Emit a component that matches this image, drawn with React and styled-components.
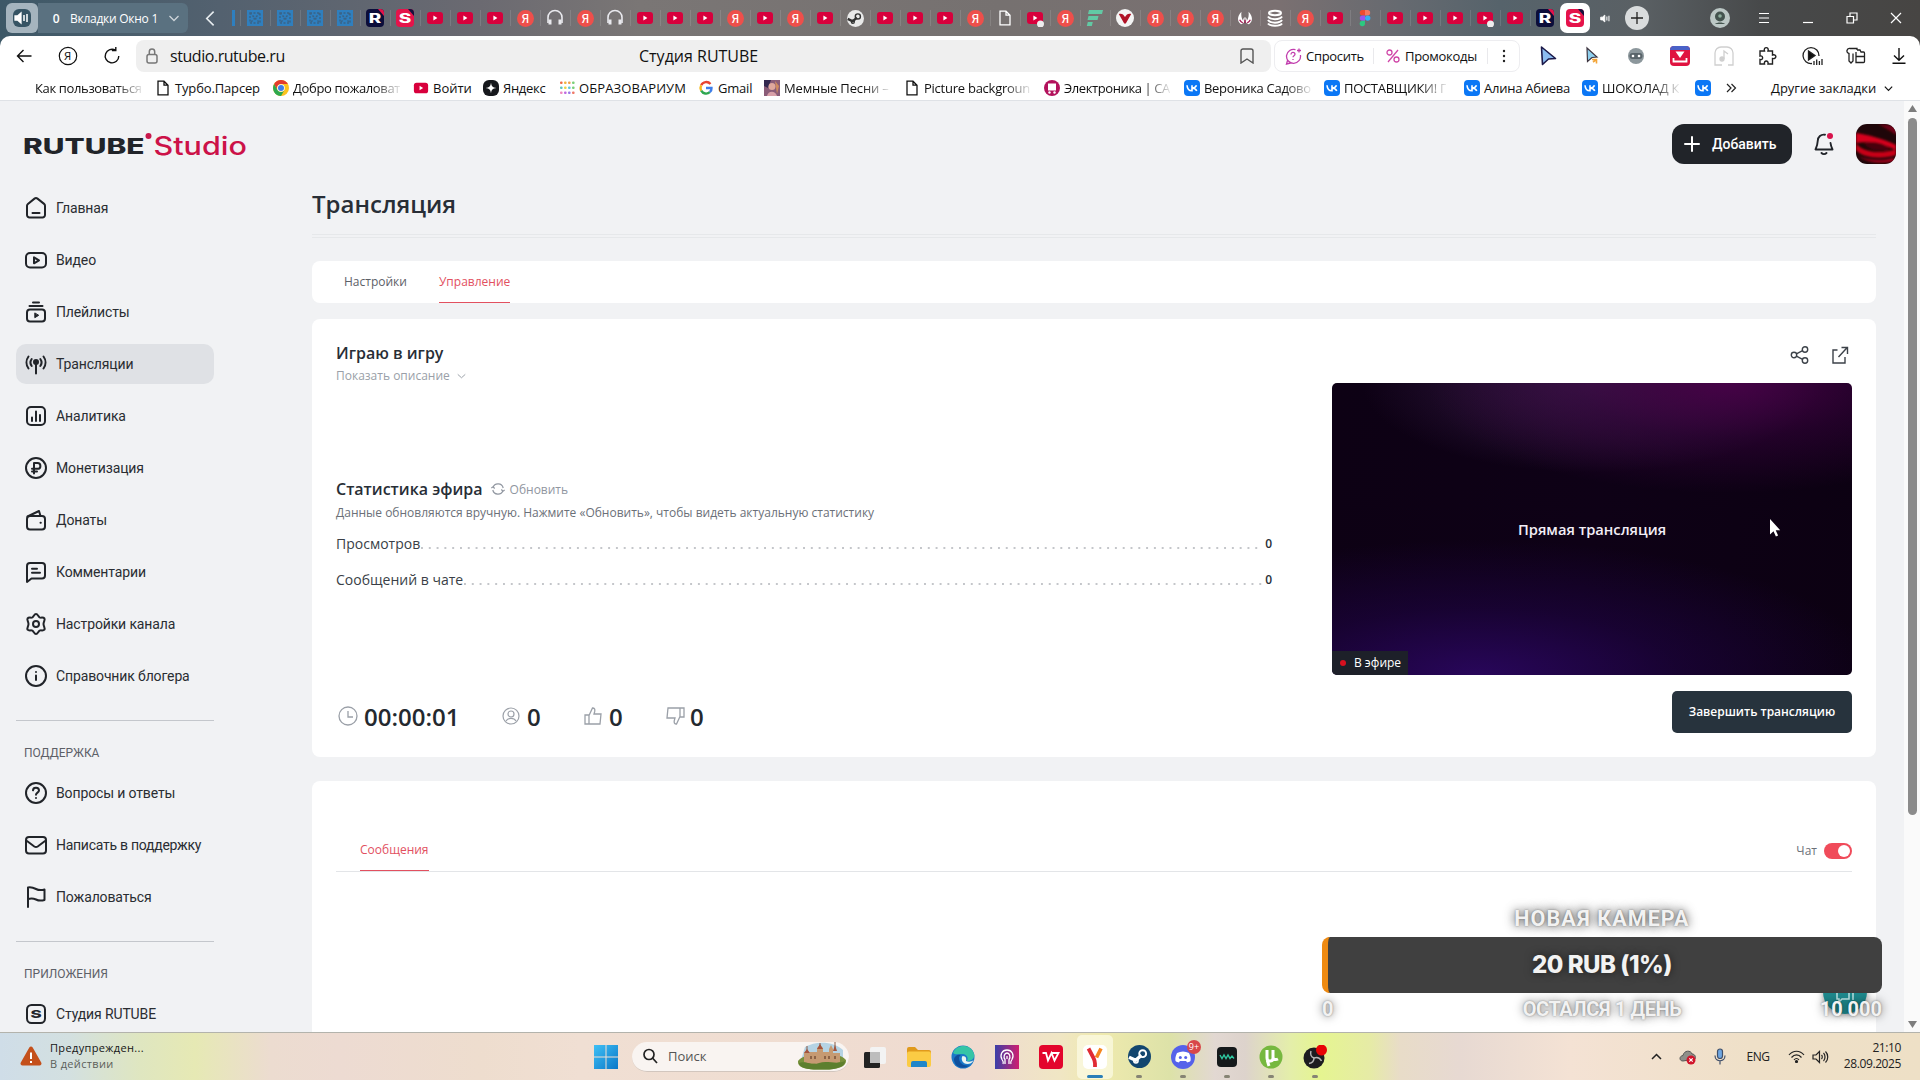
import React from "react";
import styled, { createGlobalStyle, css } from "styled-components";

const GlobalStyle = createGlobalStyle`
    * { box-sizing: border-box; }
    body {
        margin: 0;
        font-family: "Open Sans", "Noto Sans", sans-serif;
        background: #5b6266;
    }
    svg { display: block; flex: none; }
`;

const Window = styled.div`
    position: relative;
    width: 1920px;
    height: 1080px;
    overflow: hidden;
    display: flex;
    flex-direction: column;
    background: linear-gradient(90deg, #3d5867 0, #53616f 220px, #6b6a71 480px, #7a7675 640px, #767170 1000px,
        #7a7071 1280px, #666a70 1400px, #56636b 1500px, #5a6064 1640px, #47494a 1760px, #474543 1920px);
`;

/* ---------- favicons ---------- */

const YouTube = ({ dot, size = 18 }) => (
    <svg width={size} height={size} viewBox="0 0 18 18">
        <rect x="1" y="3" width="16" height="12" rx="3" fill="#d8003c" />
        <path d="M7.4 6.6v4.8L11.4 9z" fill="#fff" />
        {dot && <circle cx="14.5" cy="15" r="3.5" fill="#eee" />}
    </svg>
);

const LetterIcon = ({ bg, letter, fg = "#fff", round, size = 18, weight = 900, font = 14 }) => (
    <svg width={size} height={size} viewBox="0 0 18 18">
        <rect width="18" height="18" rx={round ? 9 : 4} fill={bg} />
        <text x="9" y={9 + font * 0.36} textAnchor="middle" fontFamily="Inter, sans-serif" fontWeight={weight} fontSize={font} fill={fg}>{letter}</text>
    </svg>
);

const YandexRed = () => <LetterIcon bg="#ee4f4b" letter="Я" round size={17} weight={500} font={12} />;
const RutubeR = () => (
    <svg width="18" height="18" viewBox="0 0 18 18">
        <rect width="18" height="18" rx="4" fill="#0b0d3a" />
        <path d="M12 0h2a4 4 0 0 1 4 4v3z" fill="#e5134a" />
        <text x="2.800" y="13.500" textLength="12.500" lengthAdjust="spacingAndGlyphs" fontFamily="Inter, sans-serif" fontWeight="800" fontSize="12.500" fill="#fff">R</text>
    </svg>
);
const RutubeS = () => (
    <svg width="18" height="18" viewBox="0 0 18 18">
        <rect width="18" height="18" rx="4" fill="#e5134a" />
        <path d="M12 0h2a4 4 0 0 1 4 4v3z" fill="#14123e" />
        <text x="2.800" y="13.500" textLength="12.500" lengthAdjust="spacingAndGlyphs" fontFamily="Inter, sans-serif" fontWeight="800" fontSize="12.500" fill="#fff">S</text>
    </svg>
);
const BlueGrid = () => (
    <svg width="18" height="18" viewBox="0 0 18 18">
        <rect x="1" y="1" width="16" height="16" fill="#2f7fbe" />
        <path d="M4 4h10v10H4zM4 4l10 10M14 4L4 14" fill="none" stroke="#3a6488" strokeWidth="1.500" strokeDasharray="2 1.5" />
    </svg>
);
const Headphones = () => (
    <svg width="18" height="18" viewBox="0 0 18 18" fill="none" stroke="#e9e9ee" strokeWidth="1.600">
        <path d="M2 14V8.500a7 7 0 0 1 14 0V14" />
        <path d="M4 10.500v5M14 10.500v5" strokeWidth="3" />
    </svg>
);
const Steam = ({ size = 17 }) => (
    <svg width={size} height={size} viewBox="0 0 18 18">
        <circle cx="9" cy="9" r="9" fill={size > 20 ? "#12466f" : "#e9e9e9"} />
        <g fill="none" stroke={size > 20 ? "#fff" : "#333"}>
            <path d="M0.800 9.500L6 12 10.500 8" strokeWidth="2.600" />
            <circle cx="11.500" cy="6.800" r="2.700" strokeWidth="1.500" />
            <circle cx="6.200" cy="12.400" r="1.700" strokeWidth="1.200" />
        </g>
    </svg>
);
const Doc = ({ color = "#fff" }) => (
    <svg width="16" height="16" viewBox="0 0 16 16" fill="none" stroke={color} strokeWidth="1.300">
        <path d="M3 1.200h6L13 5.200v9.600H3zM9 1.200v4h4" />
    </svg>
);
const GreenF = () => (
    <svg width="18" height="18" viewBox="0 0 18 18" fill="#62c9a4">
        <path d="M3 1h14l-1 4H2zM2.500 7h10l-1 4h-10zM1.800 13h5l-1 4h-5z" />
    </svg>
);
const WhiteV = () => (
    <svg width="18" height="18" viewBox="0 0 18 18">
        <circle cx="9" cy="9" r="9" fill="#f4f4f4" />
        <path d="M2.800 5c2.500-1 4.700 0 6.200 3 1.500-3 3.700-4 6.200-3L9.800 14.500H8.200z" fill="#b01226" />
    </svg>
);
const WingIcon = () => (
    <svg width="16" height="16" viewBox="0 0 18 18" fill="#fff">
        <path d="M5 2C0 7 0 13 4.500 16c3 0 4.500-3 4-8-1 1-1.500 2-1.500 4C5 10 4.500 6 5 2zM13 2c5 5 5 11 .500 14-3 0-4.500-3-4-8 1 1 1.500 2 1.500 4 2-2 2.500-6 2-10z" />
        <path d="M3 11c1 2 2 3 3.500 3.500M15 11c-1 2-2 3-3.500 3.500M9 11v4" fill="none" stroke="#a01850" strokeWidth="1.500" />
    </svg>
);
const Layers = () => (
    <svg width="18" height="18" viewBox="0 0 18 18" fill="none" stroke="#fff" strokeWidth="2">
        <ellipse cx="9" cy="4" rx="6" ry="2.200" />
        <path d="M2 7.500c2 3.500 12 3.500 14 0M2 11c2 3.500 12 3.500 14 0M2 14.500c2 3 12 3 14 0" />
    </svg>
);
const Figma = () => (
    <svg width="18" height="18" viewBox="0 0 18 18">
        <path d="M9 1H6.500a2.700 2.700 0 0 0 0 5.400H9z" fill="#ef4b30" />
        <path d="M9 1h2.500a2.700 2.700 0 0 1 0 5.400H9z" fill="#f57862" />
        <path d="M9 6.400H6.500a2.700 2.700 0 0 0 0 5.400H9z" fill="#9a55f0" />
        <circle cx="11.700" cy="9.100" r="2.700" fill="#35aef5" />
        <path d="M9 11.800H6.500A2.700 2.700 0 1 0 9 14.500z" fill="#2bc980" />
    </svg>
);
const Speaker = ({ size = 16, color = "#fff" }) => (
    <svg width={size} height={size} viewBox="0 0 16 16" fill="none" stroke={color} strokeWidth="1.300">
        <path d="M1 6h2.500L7 3v10L3.500 10H1z" fill={color} />
        <path d="M10 5v6M13 4v8" strokeWidth="1.500" />
    </svg>
);

/* ---------- tab strip ---------- */

const TabStrip = styled.div`
    height: 36px;
    display: flex;
    align-items: center;
    padding-left: 6px;
`;
const SoundChip = styled.div`
    width: 32px;
    height: 30px;
    border-radius: 6px;
    background: #a5b4be;
    display: flex;
    align-items: center;
    justify-content: center;
`;
const SoundFace = styled.div`
    padding: 1px;
    border-radius: 6px;
    background: #365464;
`;
const TabGroup = styled.div`
    width: 150px;
    height: 30px;
    display: flex;
    align-items: center;
    padding-left: 9px;
    border-radius: 0 6px 6px 0;
    background: #5a7180;
    color: #fff;
    font-size: 12px;
    letter-spacing: -0.26px;
`;
const GroupCount = styled.span`
    width: 18px;
    margin-right: 5px;
    text-align: center;
    font-weight: 600;
`;
const Chevron = styled.svg.attrs({ viewBox: "0 0 12 12", fill: "none", stroke: "currentColor" })`
    width: ${(p) => p.$size || 12}px;
    height: ${(p) => p.$size || 12}px;
    stroke-width: 1.3;
    margin-left: ${(p) => p.$left || 0}px;
`;
const TabCell = styled.div`
    width: 30px;
    height: 30px;
    display: flex;
    align-items: center;
    justify-content: center;
    border-radius: 7px;
    flex: none;
    position: relative;
    ${(p) => p.$active && css`background: #fff;`}
    ${(p) => p.$divided && css`
        &::before {
            content: "";
            position: absolute;
            left: 0;
            top: 7px;
            height: 16px;
            width: 1px;
            background: rgba(255, 255, 255, 0.12);
        }
    `}
`;
const ScrollLeft = styled.div`
    width: 52px;
    padding-left: 15px;
    display: flex;
    align-items: center;
    gap: 14px;
    color: #e6ebee;
`;
const BlueEdge = styled.div`
    width: 3px;
    height: 16px;
    background: #2f7fbe;
`;
const AddTab = styled.div`
    width: 24px;
    height: 24px;
    margin-left: 5px;
    border-radius: 50%;
    background: #d9dcdd;
    display: flex;
    align-items: center;
    justify-content: center;
`;
const WindowButtons = styled.div`
    display: flex;
    margin-left: 49px;
`;
const WinButton = styled.div`
    width: 44px;
    display: flex;
    align-items: center;
    justify-content: center;
`;

const TABS = {
    b: <BlueGrid />, R: <RutubeR />, S: <RutubeS />, y: <YouTube />, Y: <YouTube dot />, a: <YandexRed />,
    h: <Headphones />, s: <Steam />, d: <Doc />, g: <GreenF />, v: <WhiteV />, w: <WingIcon />, l: <Layers />, f: <Figma />,
};
const TAB_ORDER = "bbbbRSyyyahahyyyayaysyyyadYagvaaawlayfyyyYyR";

const Tabs = () => (
    <TabStrip>
        <SoundChip><SoundFace><Speaker /></SoundFace></SoundChip>
        <TabGroup>
            <GroupCount>0</GroupCount>Вкладки Окно 1
            <Chevron $left={10}><path d="M1.500 4l4.500 4.500L10.500 4" opacity="0.700" /></Chevron>
        </TabGroup>
        <ScrollLeft>
            <Chevron $size={15}><path d="M8.500 0.500L3 6 8.500 11.500" /></Chevron>
            <BlueEdge />
        </ScrollLeft>
        {TAB_ORDER.split("").map((key, i) => <TabCell key={i} $divided>{TABS[key]}</TabCell>)}
        <TabCell $active><RutubeS /></TabCell>
        <TabCell><Speaker size={11} /></TabCell>
        <AddTab>
            <svg width="14" height="14" viewBox="0 0 14 14" stroke="#222" strokeWidth="1.300"><path d="M7 1v12M1 7h12" /></svg>
        </AddTab>
        <WindowButtons>
            <WinButton>
                <svg width="20" height="20" viewBox="0 0 20 20">
                    <circle cx="10" cy="10" r="10" fill="#bcc8c6" />
                    <circle cx="10" cy="8.500" r="5" fill="#44544f" />
                    <circle cx="10" cy="8" r="1.800" fill="#8fb09f" />
                    <path d="M5 16c2-2 8-2 10 0z" fill="#44544f" />
                </svg>
            </WinButton>
            <WinButton><svg width="12" height="12" stroke="#fff" strokeWidth="1.200"><path d="M1 1.500h10M1 6h10M1 10.500h10" /></svg></WinButton>
            <WinButton><svg width="12" height="12" stroke="#fff" strokeWidth="1.200"><path d="M1 10.500h10" /></svg></WinButton>
            <WinButton><svg width="12" height="12" fill="none" stroke="#fff" strokeWidth="1.200"><path d="M1 4.500h6.500V11H1zM4 4.500V1h7v7H7.500" /></svg></WinButton>
            <WinButton><svg width="12" height="12" stroke="#fff" strokeWidth="1.200"><path d="M1 1l10 10M11 1L1 11" /></svg></WinButton>
        </WindowButtons>
    </TabStrip>
);

/* ---------- toolbar ---------- */

const BrowserPanel = styled.div`
    flex: 1;
    min-height: 0;
    display: flex;
    flex-direction: column;
    border-radius: 10px 10px 0 0;
    background: #fff;
    overflow: hidden;
`;
const Toolbar = styled.div`
    height: 40px;
    display: flex;
    align-items: center;
    padding-left: 2px;
`;
const ToolButton = styled.div`
    width: ${(p) => p.$w || 44}px;
    flex: none;
    display: flex;
    align-items: center;
    justify-content: center;
`;
const AddressBar = styled.div`
    width: 1135px;
    height: 32px;
    border-radius: 8px;
    background: #efefef;
    display: flex;
    align-items: center;
    padding-left: 10px;
    margin-left: 2px;
    color: #111;
`;
const Url = styled.span`
    width: 481px;
    padding-left: 12px;
    font-size: 16px;
    letter-spacing: -0.45px;
`;
const PageName = styled.span`
    flex: 1;
    font-size: 16px;
`;
const QuickBox = styled.div`
    width: 246px;
    height: 32px;
    margin: 0 6px 0 3px;
    border: 1px solid #ededf0;
    border-radius: 8px;
    display: flex;
    align-items: center;
    font-size: 13px;
    letter-spacing: -0.3px;
    color: #111;
`;
const QuickItem = styled.div`
    width: ${(p) => p.$w}px;
    height: 16px;
    display: flex;
    align-items: center;
    gap: ${(p) => p.$gap}px;
    padding-left: ${(p) => p.$pad}px;
    border-right: 1px solid #e9e9ec;
`;

const TopToolbar = () => (
    <Toolbar>
        <ToolButton>
            <svg width="16" height="16" fill="none" stroke="#111" strokeWidth="1.400"><path d="M15.500 8H1.500M7.500 2L1.500 8l6 6" /></svg>
        </ToolButton>
        <ToolButton>
            <svg width="20" height="20" viewBox="0 0 20 20">
                <circle cx="10" cy="10" r="8.700" fill="none" stroke="#111" strokeWidth="1.200" />
                <text x="9.600" y="14" textAnchor="middle" fontFamily="Open Sans" fontSize="11.500" fill="#111">Я</text>
            </svg>
        </ToolButton>
        <ToolButton>
            <svg width="18" height="18" fill="none" stroke="#111" strokeWidth="1.400"><path d="M12.500 3.200A6.800 6.800 0 1 0 15.800 9M12.800 0v3.600H9" /></svg>
        </ToolButton>
        <AddressBar>
            <svg width="12" height="16" fill="none" stroke="#777" strokeWidth="1.500"><rect x="1" y="6.500" width="10" height="8.500" rx="2" /><path d="M3.300 6.500V3.800a2.700 2.700 0 0 1 5.400 0v2.700" /></svg>
            <Url>studio.rutube.ru</Url>
            <PageName>Студия RUTUBE</PageName>
            <ToolButton $w={48}>
                <svg width="14" height="16" fill="none" stroke="#555" strokeWidth="1.400"><path d="M1 3a2 2 0 0 1 2-2h8a2 2 0 0 1 2 2v12l-6-4-6 4z" /></svg>
            </ToolButton>
        </AddressBar>
        <QuickBox>
            <QuickItem $w={99} $pad={10} $gap={4}>
                <svg width="17" height="17" fill="none" stroke="#c23fae" strokeWidth="1.300">
                    <path d="M10.500 1.600A7 7 0 1 0 15.400 7M2.500 12.500L1.500 16l4-1" />
                    <path d="M6 6.500c0-3 4-2.500 4-.300 0 1.500-2 1.500-2 3M8 11v1M14 .500v4M12 2.500h4" />
                </svg>
                Спросить
            </QuickItem>
            <QuickItem $w={114} $pad={12} $gap={5}>
                <svg width="14" height="14" fill="none" stroke="#d047a8" strokeWidth="1.300"><circle cx="3.500" cy="3.500" r="2.500" /><circle cx="10.500" cy="10.500" r="2.500" /><path d="M12 1L2 13" /></svg>
                Промокоды
            </QuickItem>
            <ToolButton $w={31}>
                <svg width="4" height="14" fill="#222"><circle cx="2" cy="2" r="1.200" /><circle cx="2" cy="7" r="1.200" /><circle cx="2" cy="12" r="1.200" /></svg>
            </ToolButton>
        </QuickBox>
        <ToolButton>
            <svg width="18" height="20"><path d="M2.500 1l14 11.500-7 .500-6 5.500z" fill="#8cbcf0" stroke="#1c1a4a" strokeWidth="1.600" strokeLinejoin="round" /></svg>
        </ToolButton>
        <ToolButton>
            <svg width="16" height="20"><path d="M3 2l10 9-5 .500-4.500 4z" fill="#8fd0ee" stroke="#3d3540" strokeWidth="1.200" /><path d="M8 13.500h4.500v4M9 16l3.500-2.500" fill="none" stroke="#f3a63a" strokeWidth="1.600" /></svg>
        </ToolButton>
        <ToolButton>
            <svg width="18" height="18"><circle cx="9" cy="9" r="8" fill="#8c979c" /><rect x="2.500" y="6" width="13" height="6" rx="3" fill="#59646a" /><circle cx="6" cy="9" r="1.300" fill="#fff" /><circle cx="12" cy="9" r="1.300" fill="#fff" /></svg>
        </ToolButton>
        <ToolButton>
            <svg width="20" height="20"><rect width="20" height="20" rx="4" fill="#e0123f" /><path d="M0 4a4 4 0 0 1 4-4h12a4 4 0 0 1 4 4z" fill="#4a62c8" /><path d="M5.500 5.500h9L10 12z" fill="#fff" /><path d="M3.500 12v3.500h13V12" fill="none" stroke="#fff" strokeWidth="1.800" /></svg>
        </ToolButton>
        <ToolButton>
            <svg width="20" height="20" fill="none" stroke="#cfcfcf" strokeWidth="1.300"><path d="M8 19H1V7a6 6 0 0 1 6-6h6a6 6 0 0 1 6 6v12h-5" /><circle cx="8" cy="13" r="2" fill="#cfcfcf" /><path d="M10 13V5l4 3" /></svg>
        </ToolButton>
        <ToolButton>
            <svg width="20" height="20" fill="none" stroke="#222" strokeWidth="1.400"><path d="M2 5h4.500c-1.500-4.500 5-4.500 3.500 0h4.500v4c4.500-1.500 4.500 4.500 0 3.500V18H10c1-4-4.500-4-3.500 0H2v-4.500c3.500 1 3.500-4.500 0-3.500z" /></svg>
        </ToolButton>
        <ToolButton>
            <svg width="22" height="20" fill="none" stroke="#222" strokeWidth="1.300"><path d="M11 17.500A8 8 0 1 1 18 10" /><path d="M7.500 5v9L14 9.500z" fill="#111" /><path d="M13 19v-4M15.700 19v-5.500M18.400 19v-4M21 19v-6" /></svg>
        </ToolButton>
        <ToolButton>
            <svg width="20" height="20" fill="none" stroke="#222" strokeWidth="1.300"><path d="M11 4V2.500H4a2.500 2.500 0 0 0-1 5V15l2 2 2-2V7.500M11 4h3l1 2h2.500a1 1 0 0 1 1 1v8.500a1 1 0 0 1-1 1h-7.500V6M10 10.500h8.500" /></svg>
        </ToolButton>
        <ToolButton $w={42}>
            <svg width="14" height="16" fill="none" stroke="#111" strokeWidth="1.400"><path d="M7 0v12M2 7.500L7 12.300l5-4.800M0.500 15.300h13" /></svg>
        </ToolButton>
    </Toolbar>
);

/* ---------- bookmarks ---------- */

const BookmarkBar = styled.div`
    height: 25px;
    display: flex;
    align-items: center;
    padding-left: 15px;
    border-bottom: 1px solid #dfe2e6;
    font-size: 13px;
    color: #111;
`;
const Bookmark = styled.div`
    width: ${(p) => p.$w}px;
    flex: none;
    display: flex;
    align-items: center;
    gap: 4px;
`;
const BookmarkIcon = styled.div`
    width: 16px;
    height: 16px;
    flex: none;
`;
const BookmarkText = styled.span`
    white-space: nowrap;
    letter-spacing: ${(p) => p.$ls || 0}px;
    ${(p) => p.$fade && css`mask-image: linear-gradient(90deg, #000 calc(100% - 26px), rgba(0, 0, 0, 0.1));`}
`;

const Vk = () => (
    <svg width="16" height="16" viewBox="0 0 16 16">
        <rect width="16" height="16" rx="4" fill="#0b77f5" />
        <path d="M3 5.200c.300 3.600 2 5.600 5 5.600V5.200M8 8c2 0 3.800-1 4.500-2.800M8 8c2.300.200 4 1.200 4.800 2.800" fill="none" stroke="#fff" strokeWidth="1.600" />
    </svg>
);
const Chrome = () => (
    <svg width="16" height="16" viewBox="0 0 16 16">
        <circle cx="8" cy="8" r="8" fill="#fcc31e" />
        <path d="M1.100 4A8 8 0 0 1 14.900 4H8a4 4 0 0 0-3.500 6z" fill="#e33b2e" />
        <path d="M1.100 4A8 8 0 0 0 8 16l3.500-6a4 4 0 0 1-7 0z" fill="#2da94f" />
        <circle cx="8" cy="8" r="3.800" fill="#fff" />
        <circle cx="8" cy="8" r="3" fill="#3f7ee8" />
    </svg>
);
const Sparkle = () => (
    <svg width="16" height="16" viewBox="0 0 16 16">
        <rect width="16" height="16" rx="6" fill="#16181c" />
        <path d="M8 2.500c.500 4 1.500 5 5.500 5.500-4 .500-5 1.500-5.500 5.500C7.500 9.500 6.500 8.500 2.500 8 6.500 7.500 7.500 6.500 8 2.500z" fill="#fff" />
    </svg>
);
const DOT_COLORS = ["#ef6b4a", "#f3b340", "#f0a050", "#7bd07a", "#5fc5c0", "#e8d44a", "#60c5e0", "#7bd07a", "#f08ac0", "#c06be0", "#9a7be8", "#ef7b6a"];
const DotGrid = () => (
    <svg width="16" height="16" viewBox="0 0 16 16">
        {DOT_COLORS.map((c, i) => (
            <rect key={i} x={1 + (i % 4) * 4} y={1.5 + Math.floor(i / 4) * 5} width="2.600" height="2.600" rx="1" fill={c} />
        ))}
    </svg>
);
const Google = () => (
    <svg width="16" height="16" viewBox="0 0 16 16" fill="none" strokeWidth="2.400">
        <path d="M12.500 4A5.600 5.600 0 0 0 3.200 5.300" stroke="#e8442f" />
        <path d="M3.200 5.300a5.600 5.600 0 0 0 0 5.400" stroke="#f6b91c" />
        <path d="M3.200 10.700a5.600 5.600 0 0 0 8.600 1.500" stroke="#2fa750" />
        <path d="M11.800 12.200c1.300-1.100 1.800-2.700 1.700-4.200H8" stroke="#3f7ee8" />
    </svg>
);
const MemePic = () => (
    <svg width="16" height="16" viewBox="0 0 16 16">
        <rect width="16" height="16" fill="#8a5c78" />
        <path d="M0 0h7L4 8 0 6z" fill="#33284f" />
        <circle cx="8" cy="6.500" r="3.500" fill="#dfa79d" />
        <path d="M3 16c1-5 8-6 10 0z" fill="#d9a0a8" />
        <path d="M11 1l4 5-2 8z" fill="#cf8a5e" />
    </svg>
);
const ShopCart = () => (
    <svg width="16" height="16" viewBox="0 0 16 16">
        <circle cx="8" cy="8" r="8" fill="#b3125c" />
        <path d="M4 3.500h8v7H4z" fill="#fff" />
        <circle cx="5.500" cy="12.500" r="1.200" fill="#fff" /><circle cx="10.500" cy="12.500" r="1.200" fill="#fff" />
    </svg>
);

const BOOKMARKS = [
    { w: 140, icon: null, text: "Как пользоваться", fade: true, ls: -0.35 },
    { w: 118, icon: <Doc color="#111" />, text: "Турбо.Парсер", ls: -0.15 },
    { w: 140, icon: <Chrome />, text: "Добро пожаловат", fade: true, ls: -0.35 },
    { w: 70, icon: <YouTube size={16} />, text: "Войти" },
    { w: 76, icon: <Sparkle />, text: "Яндекс", ls: -0.3 },
    { w: 139, icon: <DotGrid />, text: "ОБРАЗОВАРИУМ", ls: 0.1 },
    { w: 66, icon: <Google />, text: "Gmail", ls: -0.2 },
    { w: 140, icon: <MemePic />, text: "Мемные Песни –", fade: true, ls: -0.15 },
    { w: 140, icon: <Doc color="#111" />, text: "Picture backgroun", fade: true, ls: -0.25 },
    { w: 140, icon: <ShopCart />, text: "Электроника | СА", fade: true, ls: -0.4 },
    { w: 140, icon: <Vk />, text: "Вероника Садово", fade: true, ls: -0.3 },
    { w: 140, icon: <Vk />, text: "ПОСТАВЩИКИ! Г", fade: true, ls: -0.3 },
    { w: 118, icon: <Vk />, text: "Алина Абиева", ls: -0.25 },
    { w: 113, icon: <Vk />, text: "ШОКОЛАД К", fade: true, ls: -0.2 },
    { w: 30, icon: <Vk />, text: "" },
];

const Bookmarks = () => (
    <BookmarkBar>
        {BOOKMARKS.map((b, i) => (
            <Bookmark key={i} $w={b.w}>
                <BookmarkIcon>{b.icon}</BookmarkIcon>
                <BookmarkText $fade={b.fade} $ls={b.ls}>{b.text}</BookmarkText>
            </Bookmark>
        ))}
        <Bookmark $w={46}>
            <svg width="12" height="10" fill="none" stroke="#222" strokeWidth="1.200"><path d="M2 1l4 4-4 4M6.500 1l4 4-4 4" /></svg>
        </Bookmark>
        Другие закладки
        <Chevron $left={7} $size={11}><path d="M2 4l4 4 4-4" /></Chevron>
    </BookmarkBar>
);

/* ---------- site ---------- */

const Site = styled.div`
    flex: 1;
    min-height: 0;
    display: flex;
    background: #f1f2f4;
`;
const SiteContent = styled.div`
    width: 1904px;
    overflow: hidden;
`;
const Scrollbar = styled.div`
    width: 16px;
    background: #fafafa;
    display: flex;
    flex-direction: column;
    align-items: center;
    padding: 4px 0 4px 1px;
`;
const ScrollThumb = styled.div`
    width: 9px;
    height: 697px;
    margin: 6px 0 auto;
    border-radius: 5px;
    background: #8b8b8b;
`;
const SiteHeader = styled.div`
    height: 86px;
    display: flex;
    align-items: center;
    padding: 0 8px 0 24px;
`;
const AddButton = styled.div`
    width: 120px;
    height: 40px;
    margin-left: auto;
    border-radius: 12px;
    background: #212429;
    color: #fff;
    display: flex;
    align-items: center;
    gap: 12px;
    padding-left: 12px;
    font: 500 14px Roboto, sans-serif;
`;
const BellBox = styled.div`
    width: 64px;
    display: flex;
    justify-content: center;
`;
const SiteBody = styled.div`
    display: flex;
`;

const Logo = () => (
    <svg width="224" height="30" viewBox="0 0 224 30">
        <text x="-1" y="25" textLength="121.500" lengthAdjust="spacingAndGlyphs" fontFamily="Inter, sans-serif" fontWeight="800" fontSize="21" fill="#212429">RUTUBE</text>
        <circle cx="124.500" cy="7" r="3" fill="#c8184c" />
        <text x="129.500" y="25.500" textLength="93.500" lengthAdjust="spacingAndGlyphs" fontFamily="Inter, sans-serif" fontWeight="500" fontSize="25.500" fill="#cc1248">Studio</text>
    </svg>
);

const Sidebar = styled.div`
    width: 312px;
    padding: 1px 0 0 16px;
    font-family: Roboto, sans-serif;
`;
const NavItem = styled.div`
    width: 198px;
    height: 40px;
    margin-bottom: 12px;
    padding-left: 8px;
    display: flex;
    align-items: center;
    gap: 8px;
    border-radius: 10px;
    font-size: 14px;
    letter-spacing: ${(p) => (p.$long ? -0.27 : -0.13)}px;
    white-space: nowrap;
    color: #2a2d32;
    background: ${(p) => (p.$active ? "#dfe1e5" : "transparent")};
`;
const NavDivider = styled.div`
    width: 198px;
    height: 1px;
    margin: 24px 0;
    background: #c4c7cc;
`;
const NavCaption = styled.div`
    height: 16px;
    margin-bottom: 12px;
    padding-left: 8px;
    font-size: 12px;
    line-height: 16px;
    color: #5d6067;
`;
const NavSvg = styled.svg.attrs({ width: 24, height: 24, viewBox: "0 0 24 24", fill: "none", stroke: "#212429", strokeLinecap: "round", strokeLinejoin: "round" })`
    stroke-width: 2;
`;

const NAV_ICONS = {
    home: <path d="M3 9.800c0-.800.300-1.400.900-1.900l6.600-5.300c.900-.700 2.100-.700 3 0l6.600 5.300c.600.500.900 1.100.900 1.900V19a2.500 2.500 0 0 1-2.500 2.500h-13A2.500 2.500 0 0 1 3 19zM8.500 17h7" />,
    video: <><rect x="2" y="5" width="20" height="14.500" rx="4" /><path d="M10 9.300v6l5-3z" /></>,
    lists: <><rect x="3" y="9.500" width="18" height="12" rx="3" /><path d="M5.500 6h13M9 2.500h6" /><path d="M10.800 13.300v4.400l3.600-2.200z" fill="#212429" strokeWidth="1" /></>,
    live: <><path d="M12 11v10.500M4.500 4.500a10 10 0 0 0 0 12M19.500 4.500a10 10 0 0 1 0 12M7.700 7a6 6 0 0 0 0 7M16.300 7a6 6 0 0 1 0 7" /><circle cx="12" cy="10" r="2" fill="#212429" /></>,
    chart: <><rect x="3" y="3" width="18" height="18" rx="4" /><path d="M8 13.500V17M12 7.500V17M16 11v6" /></>,
    ruble: <><circle cx="12" cy="12" r="10" /><path d="M10 17.500V7h3.500a2.900 2.900 0 0 1 0 5.800H8M8 15.500h5" /></>,
    wallet: <><rect x="3" y="8" width="18" height="13.500" rx="3" /><path d="M3.500 8.500L15 3l1.500 5M16.500 14.700h.300" /></>,
    chat: <path d="M3 22V6a3 3 0 0 1 3-3h12a3 3 0 0 1 3 3v9.500a3 3 0 0 1-3 3H7.500zM8 8.700h5M8 12.700h8" />,
    gear: <><path d="M12 2c1.800 0 2.200 2.600 3.600 3.400 1.400.700 3.700-.500 4.800.900 1 1.700-.900 3.500-.900 5.700s1.900 4 .900 5.700c-1.100 1.400-3.400.200-4.800.900C14.200 19.400 13.800 22 12 22s-2.200-2.600-3.600-3.400c-1.400-.700-3.700.500-4.800-.900-1-1.700.900-3.500.900-5.700s-1.900-4-.900-5.700c1.100-1.400 3.400-.200 4.800-.900C9.800 4.600 10.200 2 12 2z" /><circle cx="12" cy="12" r="3" /></>,
    info: <><circle cx="12" cy="12" r="10" /><path d="M12 11.500V16M12 8v.100" /></>,
    help: <><circle cx="12" cy="12" r="10" /><path d="M9 9.300c.300-3.600 6-3.100 6 .200 0 2.100-3 2.200-3 4.300M12 17v.100" /></>,
    mail: <><rect x="2" y="4" width="20" height="16.500" rx="3" /><path d="M3 8l7.300 5.500c1 .700 2.400.700 3.400 0L21 8" /></>,
    flag: <path d="M4 22V2.500c3-.500 5 0 8 1.500s5 1.500 8.500.500V15c-3.500 1-5.500 1-8.500-.500s-5-1.500-8-.500" />,
};

const NavIcon = ({ name }) => {
    if (name === "studio") {
        return (
            <NavSvg>
                <rect x="3" y="3" width="18" height="18" rx="4.500" />
                <text x="6.500" y="16" textLength="11" lengthAdjust="spacingAndGlyphs" stroke="none" fill="#212429" fontFamily="Inter, sans-serif" fontWeight="800" fontSize="11">S</text>
            </NavSvg>
        );
    }
    return <NavSvg>{NAV_ICONS[name]}</NavSvg>;
};

const MENU = [
    ["home", "Главная"],
    ["video", "Видео"],
    ["lists", "Плейлисты"],
    ["live", "Трансляции"],
    ["chart", "Аналитика"],
    ["ruble", "Монетизация"],
    ["wallet", "Донаты"],
    ["chat", "Комментарии"],
    ["gear", "Настройки канала"],
    ["info", "Справочник блогера"],
];
const SUPPORT = [
    ["help", "Вопросы и ответы"],
    ["mail", "Написать в поддержку"],
    ["flag", "Пожаловаться"],
];

const NavList = ({ items }) => items.map(([icon, text]) => (
    <NavItem key={icon} $active={icon === "live"} $long={text.length > 18}>
        <NavIcon name={icon} />
        {text}
    </NavItem>
));

const Main = styled.div`
    width: 1564px;
`;
const PageTitle = styled.h1`
    height: 47px;
    margin: 0;
    padding-top: 1px;
    font-weight: 600;
    font-size: 24px;
    line-height: 32px;
    color: #282e36;
`;
const TitleRule = styled.div`
    height: 4px;
    margin-bottom: 23px;
    border-top: 1px solid #e6e8ea;
    border-bottom: 1px solid #e6e8ea;
`;
const Card = styled.div`
    background: #fff;
    border-radius: 8px;
`;
const TabsCard = styled(Card)`
    height: 42px;
    padding-left: 32px;
    margin-bottom: 16px;
    display: flex;
    gap: 32px;
`;
const Tab = styled.div`
    height: ${(p) => p.$h || 42}px;
    line-height: ${(p) => p.$line || 42}px;
    font-size: 12px;
    color: ${(p) => (p.$active ? "#e2505f" : "#5d6067")};
    border-bottom: ${(p) => (p.$active ? "1.5px solid #e2505f" : "none")};
`;
const StreamCard = styled(Card)`
    height: 438px;
    margin-bottom: 24px;
    padding: 22px 24px 0;
    display: flex;
    justify-content: space-between;
`;
const StreamInfo = styled.div`
    width: 936px;
`;
const Heading = styled.div`
    display: flex;
    align-items: center;
    height: 24px;
    font-weight: 600;
    font-size: 16px;
    color: #282e36;
`;
const MutedLine = styled.div`
    display: flex;
    align-items: center;
    height: 16px;
    margin-top: 2px;
    font-size: 12px;
    color: #9a9fa8;
`;
const StatsBlock = styled.div`
    margin-top: 94px;
`;
const Refresh = styled.span`
    display: flex;
    align-items: center;
    gap: 5px;
    margin-left: 8px;
    font-weight: 400;
    font-size: 12px;
    color: #9096a0;
`;
const Hint = styled.div`
    height: 16px;
    margin: 4px 0 12px;
    line-height: 16px;
    font-size: 12px;
    color: #6b7078;
`;
const StatRow = styled.div`
    display: flex;
    align-items: center;
    height: 20px;
    margin-bottom: 16px;
    font-size: 14px;
    color: #3a3f47;
`;
const Dots = styled.div`
    flex: 1;
    height: 2px;
    margin: 9px 3px 0 1px;
    background: linear-gradient(90deg, #c4c6ca 2px, transparent 2px) 0 0 / 7.8px 2px repeat-x;
`;
const StatValue = styled.span`
    font-weight: 600;
    font-size: 12px;
    color: #282e36;
`;
const Counters = styled.div`
    display: flex;
    align-items: center;
    height: 30px;
    margin-top: 112px;
    padding-left: 2px;
    font-weight: 600;
    font-size: 24px;
    color: #24292f;
`;
const Counter = styled.div`
    display: flex;
    align-items: center;
    gap: ${(p) => p.$gap}px;
    width: ${(p) => p.$w}px;
`;
const StreamSide = styled.div`
    width: 520px;
    display: flex;
    flex-direction: column;
    align-items: flex-end;
`;
const SideIcons = styled.div`
    display: flex;
    gap: 20px;
    height: 42px;
    padding: 4px 2px 0 0;
`;
const Player = styled.div`
    position: relative;
    width: 520px;
    height: 292px;
    border-radius: 5px;
    overflow: hidden;
    display: flex;
    align-items: center;
    justify-content: center;
    color: #f3eef6;
    font-weight: 600;
    font-size: 14.7px;
    background:
        radial-gradient(ellipse 300px 110px at 76% 0, rgba(72, 2, 72, 0.95) 0, rgba(56, 2, 62, 0.5) 50%, transparent 100%),
        radial-gradient(ellipse 230px 90px at 50% 0, rgba(66, 34, 84, 0.8) 0, transparent 100%),
        radial-gradient(ellipse 400px 135px at 28% 100%, #28065a 0, rgba(32, 4, 72, 0.55) 50%, transparent 100%),
        linear-gradient(100deg, #0d0114, #0e0116 50%, #0c0112);
`;
const LiveBadge = styled.div`
    position: absolute;
    left: 0;
    bottom: 0;
    width: 76px;
    height: 24px;
    display: flex;
    align-items: center;
    gap: 8px;
    padding: 0 0 1px 8px;
    background: #1d2029;
    color: #fff;
    font-weight: 400;
    font-size: 12px;
`;
const LiveDot = styled.span`
    width: 6px;
    height: 6px;
    border-radius: 50%;
    background: #d6101f;
`;
const StopButton = styled.div`
    width: 180px;
    height: 42px;
    margin-top: 16px;
    border-radius: 5px;
    background: #27333d;
    color: #fff;
    font-weight: 600;
    font-size: 12px;
    line-height: 41px;
    text-align: center;
`;
const ChatCard = styled(Card)`
    height: 270px;
    padding: 51px 24px 0;
`;
const ChatTabs = styled.div`
    height: 40px;
    padding-left: 24px;
    display: flex;
    justify-content: space-between;
    border-bottom: 1px solid #e3e5e8;
`;
const ChatSwitch = styled.div`
    height: 38px;
    display: flex;
    align-items: center;
    gap: 7px;
    font-size: 12px;
    color: #6b7078;
`;
const ChatLabel = styled.span`
    padding-bottom: 1px;
`;
const Toggle = styled.div`
    width: 28px;
    height: 16px;
    padding: 2px;
    border-radius: 8px;
    background: #f04b5a;
    display: flex;
    justify-content: flex-end;
`;
const Knob = styled.div`
    width: 12px;
    height: 12px;
    border-radius: 50%;
    background: #fff;
`;

const Avatar = () => (
    <svg width="40" height="40" viewBox="0 0 40 40">
        <defs>
            <clipPath id="avatar"><rect width="40" height="40" rx="11" /></clipPath>
            <filter id="soft"><feGaussianBlur stdDeviation="0.8" /></filter>
        </defs>
        <g clipPath="url(#avatar)">
            <rect width="40" height="40" fill="#1f0609" />
            <g filter="url(#soft)">
                <path d="M22 0l18 2v9C34 7 28 3 22 0z" fill="#6d0512" />
                <path d="M0 9c12 2 26 5 40 12v5C26 19 12 17 0 19z" fill="#d5061e" />
                <path d="M8 20c9-4 20-1 26 5-8 3-20 2-26-5z" fill="#4a030c" />
                <path d="M0 19c6 9 24 12 40 6v6c-14 5-34 3-40-5z" fill="#c80419" />
                <path d="M2 32c10 5 26 5 36 2v3c-12 3-26 2-36-5z" fill="#a8041a" />
            </g>
        </g>
    </svg>
);

const StudioPage = () => (
    <Site>
        <SiteContent>
            <SiteHeader>
                <Logo />
                <AddButton>
                    <svg width="16" height="16" stroke="#fff" strokeWidth="2" strokeLinecap="round"><path d="M8 1v14M1 8h14" /></svg>
                    Добавить
                </AddButton>
                <BellBox>
                    <svg width="24" height="24" viewBox="0 0 24 24" fill="none" stroke="#212429" strokeWidth="1.900" strokeLinecap="round" strokeLinejoin="round">
                        <path d="M13 2.700C8.800 2 6 5 5.800 8.500c-.200 4-1 6-2.300 9h17c-1-2.300-1.700-4-2-6.500" />
                        <path d="M9.500 21c1.300 1.300 3.700 1.300 5 0" />
                        <circle cx="18" cy="4" r="3" fill="#d8134b" stroke="none" />
                    </svg>
                </BellBox>
                <Avatar />
            </SiteHeader>
            <SiteBody>
                <Sidebar>
                    <NavList items={MENU} />
                    <NavDivider />
                    <NavCaption>ПОДДЕРЖКА</NavCaption>
                    <NavList items={SUPPORT} />
                    <NavDivider />
                    <NavCaption>ПРИЛОЖЕНИЯ</NavCaption>
                    <NavList items={[["studio", "Студия RUTUBE"]]} />
                </Sidebar>
                <Main>
                    <PageTitle>Трансляция</PageTitle>
                    <TitleRule />
                    <TabsCard>
                        <Tab>Настройки</Tab>
                        <Tab $active>Управление</Tab>
                    </TabsCard>
                    <StreamCard>
                        <StreamInfo>
                            <Heading>Играю в игру</Heading>
                            <MutedLine>
                                Показать описание
                                <Chevron $left={7} $size={9}><path d="M1 4.500l5 4.500 5-4.500" /></Chevron>
                            </MutedLine>
                            <StatsBlock>
                                <Heading>
                                    Статистика эфира
                                    <Refresh>
                                        <svg width="14" height="14" viewBox="0 0 14 14" fill="none" stroke="#9096a0" strokeWidth="1.200">
                                            <path d="M2 5.500A5.300 5.300 0 0 1 12.200 6M12 8.500A5.300 5.300 0 0 1 1.800 8M.300 6L2 4.800 3.700 6.500M13.700 8L12 9.200 10.300 7.500" />
                                        </svg>
                                        Обновить
                                    </Refresh>
                                </Heading>
                                <Hint>Данные обновляются вручную. Нажмите «Обновить», чтобы видеть актуальную статистику</Hint>
                                <StatRow>Просмотров<Dots /><StatValue>0</StatValue></StatRow>
                                <StatRow>Сообщений в чате<Dots /><StatValue>0</StatValue></StatRow>
                            </StatsBlock>
                            <Counters>
                                <Counter $w={164} $gap={6}>
                                    <svg width="20" height="20" fill="none" stroke="#9ba0a8" strokeWidth="1.300"><circle cx="10" cy="10" r="9" /><path d="M10 5v6h5" /></svg>
                                    00:00:01
                                </Counter>
                                <Counter $w={82} $gap={7}>
                                    <svg width="18" height="18" fill="none" stroke="#9ba0a8" strokeWidth="1.200"><circle cx="9" cy="9" r="8" /><circle cx="9" cy="7" r="3" /><path d="M4 14c2-3.500 8-3.500 10 0" /></svg>
                                    0
                                </Counter>
                                <Counter $w={82} $gap={6}>
                                    <svg width="19" height="18" fill="none" stroke="#9ba0a8" strokeWidth="1.300"><path d="M1 8h4v9H1zM5 8.500L8.500 1c2 0 2.700 1.300 2.200 3.500L10 7h7l-1 10H5" /></svg>
                                    0
                                </Counter>
                                <Counter $w={60} $gap={5}>
                                    <svg width="19" height="18" fill="none" stroke="#9ba0a8" strokeWidth="1.300"><path d="M18 1h-4v9h4zM14 9.500L10.500 17c-2 0-2.700-1.300-2.200-3.500L9 11H1L2 1h12" /></svg>
                                    0
                                </Counter>
                            </Counters>
                        </StreamInfo>
                        <StreamSide>
                            <SideIcons>
                                <svg width="20" height="20" fill="none" stroke="#3c4249" strokeWidth="1.400"><circle cx="4" cy="10" r="2.700" /><circle cx="15" cy="4.500" r="2.700" /><circle cx="15" cy="15.500" r="2.700" /><path d="M6.400 8.800l6.200-3.100M6.400 11.200l6.200 3.100" /></svg>
                                <svg width="20" height="20" fill="none" stroke="#3c4249" strokeWidth="1.400"><path d="M7.500 5H3v13h12v-6M8.500 12L17 2.800M11.500 2.500H17.500V9" /></svg>
                            </SideIcons>
                            <Player>
                                Прямая трансляция
                                <LiveBadge><LiveDot />В эфире</LiveBadge>
                            </Player>
                            <StopButton>Завершить трансляцию</StopButton>
                        </StreamSide>
                    </StreamCard>
                    <ChatCard>
                        <ChatTabs>
                            <Tab $active $h={39} $line={36}>Сообщения</Tab>
                            <ChatSwitch><ChatLabel>Чат</ChatLabel><Toggle><Knob /></Toggle></ChatSwitch>
                        </ChatTabs>
                    </ChatCard>
                </Main>
            </SiteBody>
        </SiteContent>
        <Scrollbar>
            <svg width="9" height="7" fill="#7d7d7d"><path d="M0 7l4.500-7L9 7z" /></svg>
            <ScrollThumb />
            <svg width="9" height="7" fill="#7d7d7d"><path d="M0 0l4.500 7L9 0z" /></svg>
        </Scrollbar>
    </Site>
);

/* ---------- donation goal over the page ---------- */

const Goal = styled.div`
    position: absolute;
    left: 1322px;
    top: 904px;
    width: 560px;
    color: #f2f2f2;
    font-family: Roboto, sans-serif;
`;
const GoalTitle = styled.div`
    height: 33px;
    line-height: 29px;
    text-align: center;
    font-weight: 700;
    font-size: 21.5px;
    letter-spacing: 1.1px;
    text-shadow: 0 0 2px rgba(0, 0, 0, 0.4), 0 0 10px rgba(0, 0, 0, 0.6), 0 0 14px rgba(0, 0, 0, 0.3);
`;
const GoalBar = styled.div`
    height: 56px;
    border-radius: 8px;
    border-left: 6px solid #ee8a12;
    background: #404040;
    line-height: 56px;
    padding-right: 6px;
    text-align: center;
    font-family: Inter, sans-serif;
    font-weight: 800;
    font-size: 24px;
    letter-spacing: -0.5px;
    text-shadow: 0 0 8px rgba(0, 0, 0, 0.6);
`;
const GoalFooter = styled.div`
    height: 32px;
    display: grid;
    grid-template-columns: 1fr auto 1fr;
    line-height: 32px;
    font-weight: 700;
    font-size: 20px;
    letter-spacing: -0.45px;
    text-shadow: 0 0 2px rgba(0, 0, 0, 0.4), 0 0 10px rgba(0, 0, 0, 0.6);
`;
const GoalMax = styled.span`
    text-align: right;
    letter-spacing: 0;
`;
const HelpBubble = styled.div`
    position: absolute;
    left: 1823px;
    top: 970px;
    width: 44px;
    height: 44px;
    border-radius: 50%;
    background: #1f8a8e;
    box-shadow: 0 1px 6px rgba(0, 0, 0, 0.4);
    display: flex;
    align-items: center;
    justify-content: center;
`;
const Pointer = styled.svg.attrs({ width: 12, height: 19, viewBox: "0 0 12 19" })`
    position: absolute;
    left: 1769px;
    top: 518px;
`;

/* ---------- taskbar ---------- */

const Taskbar = styled.div`
    height: 48px;
    flex: none;
    display: flex;
    align-items: center;
    border-top: 1px solid #b3b3ac;
    background: linear-gradient(90deg, #cfdde8 0, #d3e0e0 70px, #dfe6c0 140px, #e6e9b4 195px, #ecdcd0 270px, #eddbd2 340px,
        #eeddce 480px, #f0dfd3 580px, #efdbd0 980px, #f0e6c4 1060px, #efeaae 1100px, #dde2a8 1170px, #e2d8d2 1215px,
        #ddd3cc 1245px, #e4eeaa 1290px, #e5f590 1320px, #e6eba6 1370px, #e8dcc8 1400px, #e7d9d2 1460px, #f4e2d4 1570px,
        #efe0c8 1750px, #eee0c6 1920px);
`;
const Alert = styled.div`
    width: 584px;
    padding: 0 0 1px 20px;
    display: flex;
    align-items: center;
    gap: 8px;
`;
const AlertText = styled.div`
    font-size: 11px;
    line-height: 16px;
    letter-spacing: 0.35px;
    color: #151515;
`;
const AlertSub = styled.div`
    color: #5c5f5a;
`;
const TaskIcon = styled.div`
    position: relative;
    width: ${(p) => (p.$active ? 36 : 44)}px;
    margin: 0 ${(p) => (p.$active ? 4 : 0)}px;
    height: 44px;
    flex: none;
    display: flex;
    align-items: center;
    justify-content: center;
    border-radius: 5px;
    ${(p) => p.$active && css`background: rgba(255, 255, 240, 0.6);`}
    ${(p) => (p.$active || p.$running) && css`
        &::after {
            content: "";
            position: absolute;
            bottom: 1px;
            left: calc(50% - ${p.$active ? 8 : 3}px);
            width: ${p.$active ? 16 : 6}px;
            height: 3px;
            border-radius: 2px;
            background: ${p.$active ? "#2a7fb8" : "#868474"};
        }
    `}
`;
const SearchBox = styled.div`
    width: 217px;
    height: 30px;
    margin: 0 4px 0 4px;
    padding: 0 2px 0 10px;
    border-radius: 15px;
    background: #f9f4f1;
    border-bottom: 1px solid #d2c6be;
    display: flex;
    align-items: center;
    font-size: 13px;
    color: #555;
`;
const SearchText = styled.span`
    flex: 1;
    padding-left: 10px;
`;
const Tray = styled.div`
    flex: 1;
    display: flex;
    align-items: center;
    justify-content: flex-end;
    padding-right: 19px;
    font-size: 12px;
    letter-spacing: -0.4px;
    color: #222;
`;
const TrayItem = styled.div`
    width: ${(p) => p.$w}px;
    display: flex;
    justify-content: center;
`;
const Clock = styled.div`
    width: 72px;
    padding-bottom: 1px;
    text-align: right;
    line-height: 16px;
`;
const NineBadge = styled.div`
    position: absolute;
    right: 4px;
    top: 5px;
    width: 14px;
    height: 14px;
    border-radius: 50%;
    background: #d8474a;
    color: #fff;
    font-size: 9px;
    line-height: 14px;
    text-align: center;
`;

const APPS = [
    { icon: <svg width="24" height="24"><rect x="7" y="2" width="16" height="17" rx="2" fill="#f3f3f3" /><rect x="1" y="7" width="16" height="16" rx="1.500" fill="#222" /><rect x="7" y="7" width="10" height="11" fill="#bdbdbd" /></svg> },
    { icon: <svg width="24" height="24"><path d="M0 4a2 2 0 0 1 2-2h6l3 3h11a2 2 0 0 1 2 2v5H0z" fill="#e09a1c" /><rect y="6.500" width="24" height="15.500" rx="2" fill="#fbcb44" /><path d="M4 22v-4a2 2 0 0 1 2-2h12a2 2 0 0 1 2 2v4z" fill="#1f86c9" /></svg> },
    { icon: <svg width="24" height="24"><circle cx="12" cy="12" r="11.500" fill="#1a78c8" /><path d="M2 8C5-1 20-2 23 9c1 5-3 7-7 7 2-4-1-7-5-7-4 0-7 1-9-1z" fill="#35c4a6" /><path d="M8 13c0 5 5 9 11 7-6 5-15 3-16-5 0-4 4-6 7-5-1 .500-2 1.500-2 3z" fill="#0f4f9c" /><path d="M11.500 11c4 0 4 3 3.500 5 3 1.500 6 .500 7.500-1-1 3-4 4-6 4-5 0-7-5-5-8z" fill="#e9f4f0" /></svg> },
    {
        icon: (
            <svg width="24" height="24">
                <defs><linearGradient id="purple"><stop stopColor="#3a3fa8" /><stop offset="1" stopColor="#cf1f70" /></linearGradient></defs>
                <rect width="24" height="24" fill="url(#purple)" />
                <path d="M8 19c1-2 0-3-1-4.500C4.500 10 7 5 12 5s7.500 5 5 9.500C16 16 15 17 16 19M10 19v-4.500C8 12 9.500 8 12 8s4 4 2 6.500V19M12 11v3" fill="none" stroke="#fff" strokeWidth="1.300" />
            </svg>
        ),
    },
    { icon: <svg width="24" height="24"><rect width="24" height="24" rx="4" fill="#e3052c" /><path d="M3.500 8h3.500l2 7.500L12.500 8l3 7.500L19.500 8H12" fill="none" stroke="#fff" strokeWidth="1.800" /></svg> },
    {
        active: true,
        icon: (
            <svg width="24" height="24">
                <rect width="24" height="24" rx="5" fill="#fff" />
                <path d="M13.500 12.500L18 3.500" fill="none" stroke="#f5861e" strokeWidth="3.600" />
                <path d="M5.500 3.500l5 9.500c1 2 1.500 3.500 1.500 5.500V22" fill="none" stroke="#e02b34" strokeWidth="3.800" />
            </svg>
        ),
    },
    { running: true, icon: <Steam size={23} /> },
    {
        running: true,
        badge: "9+",
        icon: <svg width="24" height="24"><circle cx="12" cy="12" r="12" fill="#5562ea" /><path d="M6 8c4-2 8-2 12 0 1.500 3 2 5.500 1.500 8-2 1.500-3 1.500-3.500 1.300l-1-1.300H9l-1 1.300c-.500.200-1.500.200-3.500-1.300C4 13.500 4.500 11 6 8z" fill="#fff" /><circle cx="9.300" cy="12.500" r="1.500" fill="#5562ea" /><circle cx="14.700" cy="12.500" r="1.500" fill="#5562ea" /></svg>,
    },
    { running: true, icon: <svg width="20" height="20"><rect width="20" height="20" rx="4" fill="#15191b" /><path d="M3 8l2 3.500L7 8l2 3.500L11 8l2 3.500L15 9l2 2.500" fill="none" stroke="#2ec8a0" strokeWidth="1.400" /></svg> },
    { running: true, icon: <svg width="24" height="24"><circle cx="12" cy="12" r="11.500" fill="#76b83f" /><path d="M8 5v8c0 4 6 4 6 0V5M14 12c0 3 3 3 5 2M8 12c0 4 1 6 2 9" fill="none" stroke="#fff" strokeWidth="3" /></svg> },
    { running: true, icon: <svg width="24" height="24"><circle cx="11" cy="13" r="10.500" fill="#1c1c20" /><path d="M11 13c-3-1-4-4-3-7M11 13c3-1 6 0 7.500 3M11 13c0 3-2 5-5 5.500" fill="none" stroke="#b5b5b5" strokeWidth="1.500" /><circle cx="18.500" cy="5" r="5.500" fill="#e80505" /></svg> },
];

const WindowsTaskbar = () => (
    <Taskbar>
        <Alert>
            <svg width="22" height="20"><path d="M9.300 1.500a2 2 0 0 1 3.400 0l8.500 15a2 2 0 0 1-1.700 3h-17a2 2 0 0 1-1.700-3z" fill="#c4501b" /><path d="M11 6.500v6.500M11 15v2" stroke="#fff" strokeWidth="2" /></svg>
            <AlertText>Предупрежден...<AlertSub>В действии</AlertSub></AlertText>
        </Alert>
        <TaskIcon>
            <svg width="24" height="24">
                <defs><linearGradient id="win" x2="1" y2="1"><stop stopColor="#3fc0f5" /><stop offset="1" stopColor="#0a77c8" /></linearGradient></defs>
                <path d="M0 0h11.500v11.500H0zM12.500 0H24v11.500H12.500zM0 12.500h11.500V24H0zM12.500 12.500H24V24H12.500z" fill="url(#win)" />
            </svg>
        </TaskIcon>
        <SearchBox>
            <svg width="16" height="16" fill="none" stroke="#222" strokeWidth="1.700"><circle cx="7" cy="6.500" r="5" /><path d="M10.500 10l4.500 5" /></svg>
            <SearchText>Поиск</SearchText>
            <svg width="50" height="28" viewBox="0 0 50 28">
                <path d="M8 5C20-2 38 0 46 8v10H4z" fill="#b5d3e4" />
                <path d="M1 19c4-5 12-7 22-6 12-2 22 0 26 5 1 7-10 10-24 9.500C10 28 0 26 1 19z" fill="#77913c" />
                <path d="M7 20v-9l3-3 3 3v-1h7V6l3-3 3 3v4h6V7l2-4 2 4v4h7v9c-8 3-28 3-36 0z" fill="#c69a72" />
                <path d="M10 4v5M23 1v4M38 0v9" stroke="#8a5a44" />
                <path d="M36 9l2-6 2 6zM7 11l3-4 3 4zM20 7l3-5 3 5z" fill="#a4543d" />
                <path d="M14 14v3M18 14v3M28 14v3M32 14v3M38 14v3" stroke="#7a5238" strokeWidth="1.500" />
                <path d="M2 21c6-3 12 3 20 0s18 2 26-2c0 6-9 9-23 8.500C12 28 2 26 2 21z" fill="#5d7f2e" />
            </svg>
        </SearchBox>
        {APPS.map((app, i) => (
            <TaskIcon key={i} $active={app.active} $running={app.running}>
                {app.icon}
                {app.badge && <NineBadge>{app.badge}</NineBadge>}
            </TaskIcon>
        ))}
        <Tray>
            <TrayItem $w={32}><svg width="11" height="7" fill="none" stroke="#222" strokeWidth="1.500"><path d="M1 6l4.500-4.500L10 6" /></svg></TrayItem>
            <TrayItem $w={32}>
                <svg width="18" height="16"><path d="M4 12C0 12 0 7 4 6.500 5 1 12 1 13 5c3 0 4 3 3 5z" fill="#8f8f89" stroke="#555" /><circle cx="12" cy="11" r="4.500" fill="#d1142b" /><path d="M10.300 9.300l3.400 3.400M13.700 9.300l-3.400 3.400" stroke="#fff" strokeWidth="1.200" /></svg>
            </TrayItem>
            <TrayItem $w={32}>
                <svg width="12" height="17" fill="none" stroke="#41506a" strokeWidth="1.200"><rect x="3.500" y="1" width="5" height="9.500" rx="2.500" fill="#6ea6e2" /><path d="M1 7.500c0 7 10 7 10 0M6 13v3.500" /></svg>
            </TrayItem>
            <TrayItem $w={44}>ENG</TrayItem>
            <TrayItem $w={32}>
                <svg width="17" height="13" fill="none" stroke="#222" strokeWidth="1.200"><path d="M1 5c4-5 11-5 15 0M3.500 7.500c3-3.500 7-3.500 10 0M6 10c1.500-2 3.500-2 5 0" /><circle cx="8.500" cy="11.500" r="1" fill="#222" /></svg>
            </TrayItem>
            <TrayItem $w={17}>
                <svg width="17" height="14" fill="none" stroke="#222" strokeWidth="1.200"><path d="M1 5h3l3.500-3.500v11L4 9H1zM9.500 5c1 1 1 3 0 4M11.500 3c2 2 2 6 0 8M13.500 1.500c3 3 3 8 0 11" /></svg>
            </TrayItem>
            <Clock>21:10<br />28.09.2025</Clock>
        </Tray>
    </Taskbar>
);

const App = () => (
    <Window>
        <GlobalStyle />
        <Tabs />
        <BrowserPanel>
            <TopToolbar />
            <Bookmarks />
            <StudioPage />
        </BrowserPanel>
        <WindowsTaskbar />
        <HelpBubble>
            <svg width="22" height="22" fill="none" stroke="#bfe6e6" strokeWidth="1.500"><path d="M3 8h12v10H8l-3 3v-3H3zM15 11h4v8" /></svg>
        </HelpBubble>
        <Goal>
            <GoalTitle>НОВАЯ КАМЕРА</GoalTitle>
            <GoalBar>20 RUB (1%)</GoalBar>
            <GoalFooter>
                <span>0</span>
                <span>ОСТАЛСЯ 1 ДЕНЬ</span>
                <GoalMax>10 000</GoalMax>
            </GoalFooter>
        </Goal>
        <Pointer>
            <path d="M1 1v15.500l3.500-3.300 2.400 5.300 2.200-1-2.400-5.200h4.500z" fill="#fff" />
        </Pointer>
    </Window>
);

export default App;
